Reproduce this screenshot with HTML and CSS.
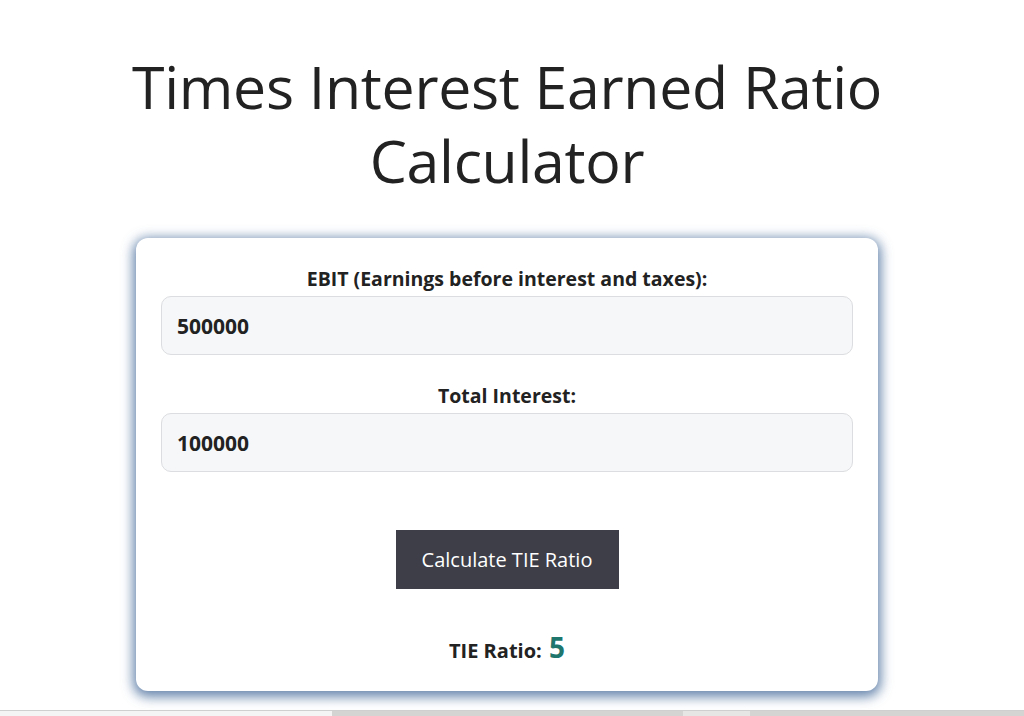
FILE: index.html
```html
<!DOCTYPE html>
<html lang="en">
<head>
    <meta charset="UTF-8">
    <meta name="viewport" content="width=device-width, initial-scale=1.0">
    <title>Times Interest Earned Ratio Calculator</title>
    <link rel="stylesheet" href="styles.css">
</head>
<body>

    <!-- 标题 -->
    <h1 class="page-title">Times Interest Earned Ratio Calculator</h1>

    <!-- 计算器卡片 -->
    <div class="calculator">
        <form id="tieForm" onsubmit="calculateTIE(event)">
            <div class="field">
                <label for="ebit">EBIT (Earnings before interest and taxes):</label>
                <input type="number" id="ebit" value="500000">
            </div>
            <div class="field">
                <label for="interest">Total Interest:</label>
                <input type="number" id="interest" value="100000">
            </div>
            <button type="submit">Calculate TIE Ratio</button>
        </form>
        <p class="result">TIE Ratio: <span id="tieResult">5</span></p>
    </div>

    <div class="taskbar">
        <span class="seg seg-light"></span>
        <span class="seg seg-gray"></span>
        <span class="seg seg-mid"></span>
        <span class="seg seg-gray seg-fill"></span>
    </div>

    <script>
        function calculateTIE(event) {
            event.preventDefault();
            const ebit = parseFloat(document.getElementById('ebit').value);
            const interest = parseFloat(document.getElementById('interest').value);
            const out = document.getElementById('tieResult');
            if (!interest) {
                out.textContent = '-';
                return;
            }
            out.textContent = Math.round(ebit / interest * 100) / 100;
        }
    </script>

</body>
</html>
```

FILE: styles.css
```css
* {
    margin: 0;
    padding: 0;
    box-sizing: border-box;
}

body {
    font-family: 'Open Sans', 'Noto Sans', sans-serif;
    color: #222;
    background: #fff;
    padding: 49px 10px 0 0;
    overflow: hidden;
    height: 100vh;
}

.page-title {
    font-size: 59px;
    font-weight: 400;
    line-height: 74px;
    text-align: center;
    color: #222;
    letter-spacing: -0.3px;
    max-width: 800px;
    margin: 0 auto;
}

.calculator {
    width: 742px;
    margin: 41px auto 0;
    background: #fff;
    border-radius: 12px;
    box-shadow: 0 3px 12px 3px rgba(55, 95, 145, 0.75);
    padding: 28px 25px 22px;
    text-align: center;
}

.field {
    margin-bottom: 28px;
}

.field label {
    display: block;
    font-size: 19.5px;
    font-weight: 700;
    line-height: 26px;
    margin-bottom: 4px;
}

.field input {
    width: 100%;
    height: 59px;
    padding: 0 15px;
    font-family: inherit;
    font-size: 21px;
    font-weight: 700;
    color: #222;
    background: #f6f7f9;
    border: 1px solid #dcdde0;
    border-radius: 10px;
    outline: none;
}

.field input::-webkit-inner-spin-button,
.field input::-webkit-outer-spin-button {
    -webkit-appearance: none;
}

button {
    display: block;
    margin: 58px auto 0;
    width: 223px;
    height: 59px;
    background: #3d3e47;
    color: #fff;
    border: none;
    font-family: inherit;
    font-size: 20px;
    cursor: pointer;
}

button:hover {
    background: #2c2d34;
}

.result {
    margin-top: 40px;
    font-size: 20px;
    font-weight: 700;
    line-height: 36px;
}

.result span {
    font-size: 28px;
    color: #1e766c;
    margin-left: 2px;
}

/* 底部任务栏 */
.taskbar {
    position: fixed;
    left: 0;
    bottom: 0;
    width: 100%;
    height: 6px;
    display: flex;
    border-top: 1px solid #cfcfcf;
}

.seg {
    height: 100%;
}

.seg-light {
    width: 332px;
    background: #f4f4f4;
}

.seg-gray {
    width: 351px;
    background: #d4d4d2;
}

.seg-mid {
    width: 67px;
    background: #e6e6e4;
}

.seg-fill {
    flex: 1;
}
```
